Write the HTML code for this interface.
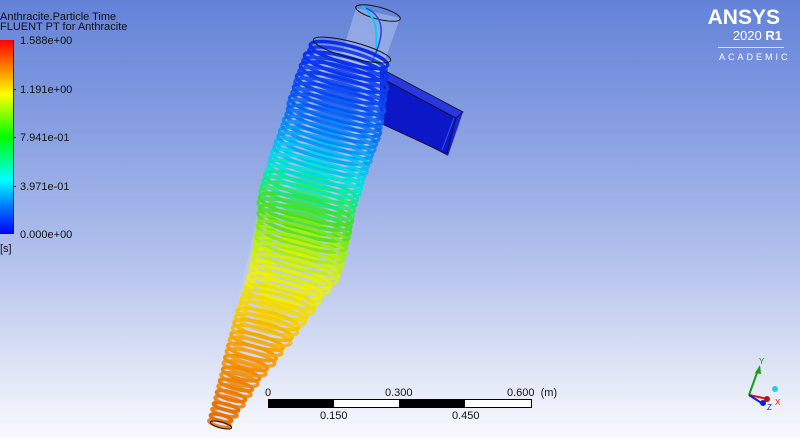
<!DOCTYPE html>
<html><head><meta charset="utf-8"><style>
html,body{margin:0;padding:0;}
body{width:800px;height:438px;overflow:hidden;position:relative;font-family:"Liberation Sans",sans-serif;
background:linear-gradient(to bottom,#6382d8 0%,#88a0e2 30%,#b4c2ec 60%,#e0e6f6 85%,#f8f9fd 100%);}
.t{position:absolute;font-size:11px;color:#111;white-space:nowrap;line-height:11px;}
svg{position:absolute;left:0;top:0;}
</style></head><body>
<div class="t" style="left:0;top:12px">Anthracite.Particle Time</div>
<div class="t" style="left:0;top:22px">FLUENT PT for Anthracite</div>
<div style="position:absolute;left:0;top:40px;width:13px;height:194px;background:linear-gradient(to bottom,#ff0000,#ff8800 15%,#ffff00 28%,#00ff00 50%,#00ffff 72%,#0080ff 85%,#0000ff);border-right:1px solid #222"></div>
<div class="t" style="left:20px;top:36px">1.588e+00</div>
<div class="t" style="left:20px;top:85px">1.191e+00</div>
<div class="t" style="left:20px;top:133px">7.941e-01</div>
<div class="t" style="left:20px;top:182px">3.971e-01</div>
<div class="t" style="left:20px;top:230px">0.000e+00</div>
<div class="t" style="left:0;top:244px">[s]</div>
<div style="position:absolute;left:13px;top:89px;width:3px;height:1px;background:#222"></div>
<div style="position:absolute;left:13px;top:137px;width:3px;height:1px;background:#222"></div>
<div style="position:absolute;left:13px;top:186px;width:3px;height:1px;background:#222"></div>

<div style="position:absolute;right:20px;top:6px;color:#fff;font-weight:bold;font-size:21px;">ANSYS</div>
<div style="position:absolute;right:18px;top:28px;color:#fff;font-size:13px">2020 <b>R1</b></div>
<div style="position:absolute;left:718px;top:47px;width:66px;height:1px;background:#dde4f6"></div>
<div style="position:absolute;left:719px;top:52px;color:#fff;font-size:9px;letter-spacing:3px">ACADEMIC</div>

<svg width="800" height="438">
<polygon points="356,8 400,18 378,80 340,60" fill="#c0ccf0" opacity="0.45"/>
<ellipse cx="378" cy="13" rx="23" ry="6" transform="rotate(15 378 13)" fill="none" stroke="#111" stroke-width="1"/>
<path d="M362,6 C385,25 372,45 378,58 C382,66 368,70 372,72" fill="none" stroke="#10c8f0" stroke-width="2"/>
<path d="M366,8 C392,20 378,48 372,62" fill="none" stroke="#1050d8" stroke-width="1.5"/>
<polygon points="312,48 390,60 382,130 357,200 346,250 300,330 240,400 232,428 210,424 215,390 230,330 250,250 262,190 285,120 300,70" fill="#c8d2f2" opacity="0.5"/>
<polygon points="380,68 463,112 448,156 380,120" fill="#1a26d6"/>
<polygon points="385,80 456,118 447,154 382,124" fill="#0c18c8" stroke="#111" stroke-width="0.8"/>
<polygon points="380,68 463,112 456,118 385,80" fill="#2838e0" stroke="#111" stroke-width="0.8"/>
<line x1="454" y1="118" x2="442" y2="150" stroke="#3050ff" stroke-width="1"/>
<g id="rings" fill="none" stroke-width="3.5">
<ellipse cx="349" cy="55" rx="40" ry="9" transform="rotate(15 349 55)" stroke="#0a2ee8"/>
<ellipse cx="346" cy="66" rx="43" ry="9" transform="rotate(15 346 66)" stroke="#0a34ea"/>
<ellipse cx="344" cy="77" rx="45" ry="10" transform="rotate(15 344 77)" stroke="#0b3cf0"/>
<ellipse cx="341" cy="88" rx="46" ry="10" transform="rotate(15 341 88)" stroke="#0a44f0"/>
<ellipse cx="339" cy="99" rx="47" ry="10" transform="rotate(15 339 99)" stroke="#0a50f2"/>
<ellipse cx="336" cy="110" rx="48" ry="10" transform="rotate(15 336 110)" stroke="#0a60f4"/>
<ellipse cx="334" cy="121" rx="48" ry="10" transform="rotate(15 334 121)" stroke="#0570f5"/>
<ellipse cx="330" cy="132" rx="48" ry="10" transform="rotate(15 330 132)" stroke="#0a88f5"/>
<ellipse cx="326" cy="143" rx="48" ry="10" transform="rotate(15 326 143)" stroke="#06a0f5"/>
<ellipse cx="322" cy="154" rx="48" ry="10" transform="rotate(15 322 154)" stroke="#00c0f0"/>
<ellipse cx="318" cy="165" rx="48" ry="10" transform="rotate(15 318 165)" stroke="#00d8e8"/>
<ellipse cx="315" cy="176" rx="48" ry="10" transform="rotate(15 315 176)" stroke="#00e8c8"/>
<ellipse cx="311" cy="187" rx="48" ry="10" transform="rotate(15 311 187)" stroke="#10e890"/>
<ellipse cx="308" cy="198" rx="48" ry="10" transform="rotate(15 308 198)" stroke="#30e860"/>
<ellipse cx="306" cy="209" rx="48" ry="10" transform="rotate(15 306 209)" stroke="#40e030"/>
<ellipse cx="305" cy="220" rx="47" ry="10" transform="rotate(15 305 220)" stroke="#50e020"/>
<ellipse cx="303" cy="231" rx="46" ry="10" transform="rotate(15 303 231)" stroke="#80e810"/>
<ellipse cx="301" cy="242" rx="46" ry="10" transform="rotate(15 301 242)" stroke="#a0f010"/>
<ellipse cx="299" cy="253" rx="45" ry="10" transform="rotate(15 299 253)" stroke="#c0f010"/>
<ellipse cx="296" cy="264" rx="44" ry="10" transform="rotate(15 296 264)" stroke="#d8f010"/>
<ellipse cx="291" cy="275" rx="41" ry="9" transform="rotate(15 291 275)" stroke="#e8f010"/>
<ellipse cx="285" cy="286" rx="38" ry="9" transform="rotate(15 285 286)" stroke="#f0f000"/>
<ellipse cx="280" cy="297" rx="36" ry="8" transform="rotate(15 280 297)" stroke="#f0e000"/>
<ellipse cx="274" cy="308" rx="34" ry="8" transform="rotate(15 274 308)" stroke="#f8d800"/>
<ellipse cx="268" cy="319" rx="32" ry="7" transform="rotate(15 268 319)" stroke="#f8c800"/>
<ellipse cx="263" cy="330" rx="30" ry="7" transform="rotate(15 263 330)" stroke="#f8b800"/>
<ellipse cx="257" cy="341" rx="27" ry="6" transform="rotate(15 257 341)" stroke="#f8a800"/>
<ellipse cx="252" cy="352" rx="25" ry="6" transform="rotate(15 252 352)" stroke="#f89a00"/>
<ellipse cx="246" cy="363" rx="22" ry="5" transform="rotate(15 246 363)" stroke="#f89000"/>
<ellipse cx="241" cy="374" rx="19" ry="5" transform="rotate(15 241 374)" stroke="#f08800"/>
<ellipse cx="236" cy="385" rx="17" ry="4" transform="rotate(15 236 385)" stroke="#f08000"/>
<ellipse cx="231" cy="396" rx="15" ry="4" transform="rotate(15 231 396)" stroke="#f07800"/>
<ellipse cx="226" cy="407" rx="13" ry="3" transform="rotate(15 226 407)" stroke="#e87000"/>
<ellipse cx="221" cy="418" rx="11" ry="3" transform="rotate(15 221 418)" stroke="#e87000"/>
</g>
<use href="#rings" transform="translate(-1.5,5.5)" stroke-width="2" opacity="0.85"/>
<ellipse cx="221" cy="425" rx="11" ry="3" transform="rotate(15 221 425)" fill="none" stroke="#111" stroke-width="1"/>
<ellipse cx="352" cy="50" rx="40" ry="8" transform="rotate(15 352 50)" fill="none" stroke="#111" stroke-width="1"/>
<rect x="268.5" y="399.5" width="263" height="8" fill="#fff" stroke="#000"/>
<rect x="268" y="399" width="66" height="9" fill="#000"/>
<rect x="399" y="399" width="66" height="9" fill="#000"/>
<line x1="749" y1="395" x2="758" y2="370" stroke="#10a010" stroke-width="2"/>
<polygon points="760,365 755,373 761,374" fill="#10a010"/>
<line x1="749" y1="395" x2="768" y2="399" stroke="#e01010" stroke-width="2"/>
<line x1="749" y1="395" x2="763" y2="404" stroke="#1020d0" stroke-width="2"/>
<circle cx="767" cy="399" r="3" fill="#c01010"/>
<circle cx="763" cy="403" r="3" fill="#1020d0"/>
<circle cx="775" cy="389" r="3" fill="#20d0e0"/>
</svg>
<div class="t" style="left:265px;top:388px">0</div>
<div class="t" style="left:385px;top:388px">0.300</div>
<div class="t" style="left:507px;top:388px">0.600&nbsp;&nbsp;(m)</div>
<div class="t" style="left:320px;top:411px">0.150</div>
<div class="t" style="left:452px;top:411px">0.450</div>
<div style="position:absolute;left:759px;top:357px;color:#10a010;font-size:8px">Y</div>
<div style="position:absolute;left:775px;top:398px;color:#e01010;font-size:8px">X</div>
<div style="position:absolute;left:767px;top:403px;color:#1020d0;font-size:8px">Z</div>
</body></html>
